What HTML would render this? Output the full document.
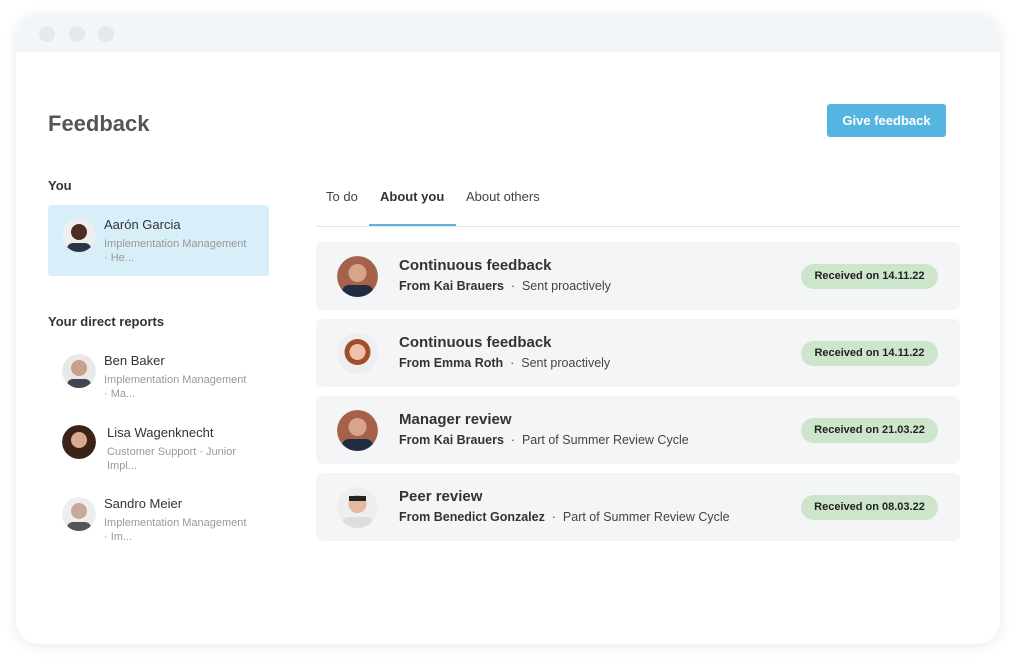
<!DOCTYPE html>
<html><head><meta charset="utf-8"><style>
*{margin:0;padding:0;box-sizing:border-box}
body{width:1024px;height:661px;background:#fff;font-family:"Liberation Sans",sans-serif;color:#333;position:relative;overflow:hidden}
.win{position:absolute;left:16px;top:14px;width:984px;height:630px;border-radius:24px;background:#fff;box-shadow:0 2px 14px rgba(0,0,0,.09);overflow:hidden}
.bar{height:38px;background:#f2f6f8}
.dot{position:absolute;top:12px;width:16px;height:16px;border-radius:50%;background:#e5e9ec}
.a{position:absolute}
.av{position:absolute;border-radius:50%;overflow:hidden}
.name{font-size:13px;color:#333}
.sub{font-size:11px;color:#999;line-height:14px}
.card{position:absolute;left:300px;width:644px;height:68px;background:#f3f5f7;border-radius:6px}
.card .t{position:absolute;left:83px;top:15px;font-size:15px;font-weight:bold;color:#333}
.card .s{position:absolute;left:83px;top:37px;font-size:12.5px;color:#444}
.card .s b{color:#333}
.badge{position:absolute;left:485px;top:22px;width:137px;height:25px;border-radius:13px;background:#cde5cb;font-size:11px;font-weight:bold;text-align:center;line-height:25px;color:#222}
</style></head><body>
<div class="win">
<div class="bar"></div>
<div class="dot" style="left:23px"></div><div class="dot" style="left:53px"></div><div class="dot" style="left:82px"></div>
<div class="a" style="left:32px;top:97px;font-size:22px;font-weight:bold;color:#555">Feedback</div>
<div class="a" style="left:811px;top:90px;width:119px;height:33px;background:#56b4e0;border-radius:3px;color:#fff;font-size:13px;font-weight:bold;text-align:center;line-height:33px">Give feedback</div>
<div class="a" style="left:32px;top:164px;font-size:13px;font-weight:bold">You</div>
<div class="a" style="left:32px;top:191px;width:221px;height:71px;background:#d8eef8;border-radius:3px"></div>
<svg class="av" style="left:46px;top:204px" width="34" height="34"><circle cx="17" cy="17" r="17" fill="#eee"/><circle cx="17" cy="14" r="8" fill="#4a2e22"/><rect x="5" y="25" width="24" height="12" rx="6" fill="#2b3548"/></svg>
<div class="a name" style="left:88px;top:203px">Aarón Garcia</div>
<div class="a sub" style="left:88px;top:223px">Implementation Management<br>· He...</div>
<div class="a" style="left:32px;top:300px;font-size:13px;font-weight:bold">Your direct reports</div>
<svg class="av" style="left:46px;top:340px" width="34" height="34"><circle cx="17" cy="17" r="17" fill="#e8e8e8"/><circle cx="17" cy="14" r="8" fill="#c9a08a"/><rect x="5" y="25" width="24" height="12" rx="6" fill="#445"/></svg>
<div class="a name" style="left:88px;top:339px">Ben Baker</div>
<div class="a sub" style="left:88px;top:359px">Implementation Management<br>· Ma...</div>
<svg class="av" style="left:46px;top:411px" width="34" height="34"><circle cx="17" cy="17" r="17" fill="#3a2418"/><circle cx="17" cy="15" r="8" fill="#d8a98c"/></svg>
<div class="a name" style="left:91px;top:411px">Lisa Wagenknecht</div>
<div class="a sub" style="left:91px;top:431px">Customer Support · Junior<br>Impl...</div>
<svg class="av" style="left:46px;top:483px" width="34" height="34"><circle cx="17" cy="17" r="17" fill="#eee"/><circle cx="17" cy="14" r="8" fill="#c9a89a"/><rect x="5" y="25" width="24" height="12" rx="6" fill="#555"/></svg>
<div class="a name" style="left:88px;top:482px">Sandro Meier</div>
<div class="a sub" style="left:88px;top:502px">Implementation Management<br>· Im...</div>
<div class="a" style="left:310px;top:175px;font-size:13px;color:#444">To do</div>
<div class="a" style="left:364px;top:175px;font-size:13px;font-weight:bold;color:#333">About you</div>
<div class="a" style="left:450px;top:175px;font-size:13px;color:#444">About others</div>
<div class="a" style="left:300px;top:212px;width:644px;height:1px;background:#e2e5e8"></div>
<div class="a" style="left:353px;top:210px;width:87px;height:2px;background:#5db4dc"></div>

<div class="card" style="top:228px"><svg class="av" style="left:21px;top:14px" width="41" height="41"><circle cx="20.5" cy="20.5" r="20.5" fill="#a5614a"/><circle cx="20.5" cy="17" r="9" fill="#d7a58a"/><rect x="5" y="29" width="31" height="14" rx="7" fill="#1f2c44"/></svg><div class="t">Continuous feedback</div><div class="s"><b>From Kai Brauers</b> &nbsp;·&nbsp; Sent proactively</div><div class="badge">Received on 14.11.22</div></div>
<div class="card" style="top:305px"><svg class="av" style="left:21px;top:14px" width="41" height="41"><circle cx="20.5" cy="20.5" r="20.5" fill="#eee"/><circle cx="20.5" cy="19" r="13" fill="#a24e2c"/><circle cx="20.5" cy="19" r="8" fill="#edc2a8"/></svg><div class="t">Continuous feedback</div><div class="s"><b>From Emma Roth</b> &nbsp;·&nbsp; Sent proactively</div><div class="badge">Received on 14.11.22</div></div>
<div class="card" style="top:382px"><svg class="av" style="left:21px;top:14px" width="41" height="41"><circle cx="20.5" cy="20.5" r="20.5" fill="#a5614a"/><circle cx="20.5" cy="17" r="9" fill="#d7a58a"/><rect x="5" y="29" width="31" height="14" rx="7" fill="#1f2c44"/></svg><div class="t">Manager review</div><div class="s"><b>From Kai Brauers</b> &nbsp;·&nbsp; Part of Summer Review Cycle</div><div class="badge">Received on 21.03.22</div></div>
<div class="card" style="top:459px"><svg class="av" style="left:21px;top:14px" width="41" height="41"><circle cx="20.5" cy="20.5" r="20.5" fill="#eee"/><circle cx="20.5" cy="17" r="9" fill="#e2b89e"/><rect x="12" y="9" width="17" height="5" fill="#222"/><rect x="5" y="30" width="31" height="14" rx="7" fill="#ddd"/></svg><div class="t">Peer review</div><div class="s"><b>From Benedict Gonzalez</b> &nbsp;·&nbsp; Part of Summer Review Cycle</div><div class="badge">Received on 08.03.22</div></div>
</div>
</body></html>
